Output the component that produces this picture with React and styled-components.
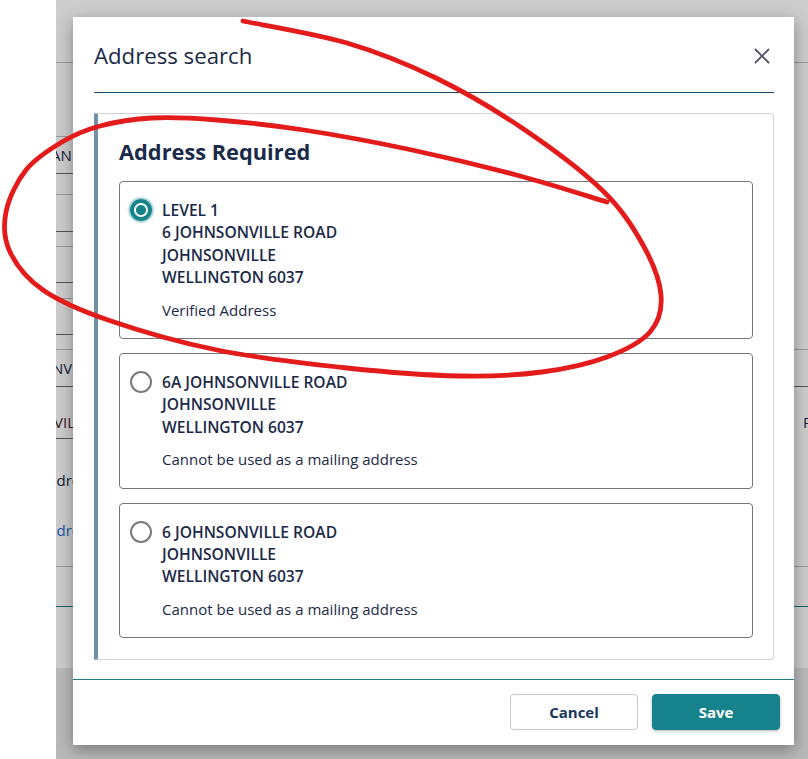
import React from "react";
import styled, { createGlobalStyle } from "styled-components";

const GlobalStyle = createGlobalStyle`
  html, body { margin: 0; padding: 0; height: 100%; }
  body {
    font-family: "Open Sans", "Noto Sans", "Liberation Sans", sans-serif;
    background: #fff;
    overflow: hidden;
  }
  #root { height: 100%; }
  *, *::before, *::after { box-sizing: border-box; }
`;

const Screen = styled.div`
  position: relative;
  display: flex;
  width: 808px;
  height: 759px;
  overflow: hidden;
  background: #fff;
`;

const Gutter = styled.div`
  flex: none;
  width: 56px;
  background: #fff;
`;

const AppArea = styled.div`
  position: relative;
  flex: 1;
  overflow: hidden;
  background: #e8e8e8;
`;

const Page = styled.div`
  display: flex;
  flex-direction: column;
  height: 668px;
  background: #fff;
`;

const PageRow = styled.div`
  flex: none;
  display: flex;
  align-items: stretch;
  height: ${(p) => p.$h}px;
  border-bottom: ${(p) => (p.$full && p.$line ? `1px solid ${p.$line}` : "none")};
`;

const LeftCell = styled.div`
  flex: none;
  width: 120px;
  display: flex;
  align-items: center;
  overflow: hidden;
  border-bottom: ${(p) => (!p.$full && p.$line ? `1px solid ${p.$line}` : "none")};
`;

const PageText = styled.span`
  white-space: nowrap;
  font-size: 15px;
  line-height: 22px;
  margin-left: ${(p) => p.$offset}px;
  color: ${(p) => p.$color};
`;

const RightCell = styled.div`
  flex: none;
  margin-left: auto;
  width: 5px;
  display: flex;
  align-items: center;
`;

const Backdrop = styled.div`
  position: absolute;
  inset: 0;
  background: rgba(0, 0, 0, 0.2);
`;

const Modal = styled.div`
  position: absolute;
  top: 17px;
  left: 17px;
  width: 721px;
  background: #fff;
  box-shadow: 0 5px 15px rgba(0, 0, 0, 0.35);
  display: flex;
  flex-direction: column;
`;

const Header = styled.div`
  display: flex;
  align-items: center;
  justify-content: space-between;
  margin: 0 20px 0 21px;
  padding: 23px 0 21px;
  border-bottom: 1px solid #1d4a6b;
`;

const Title = styled.h2`
  margin: 0;
  font-size: 22.2px;
  line-height: 31px;
  font-weight: 400;
  color: #1b2a48;
`;

const CloseButton = styled.button`
  flex: none;
  width: 24px;
  height: 24px;
  padding: 0;
  border: 0;
  background: none;
  display: flex;
  align-items: center;
  justify-content: center;
  color: #4e5668;
  cursor: pointer;
`;

const Body = styled.div`
  padding: 20px 20px 19px 21px;
`;

const Panel = styled.section`
  display: flex;
  flex-direction: column;
  gap: 14px;
  padding: 25px 20px 21px 21px;
  border: 1px solid #d3d3d3;
  border-left: 4px solid #7090a8;
  border-radius: 0 4px 4px 0;
`;

const PanelTitle = styled.h3`
  margin: 0 0 2px;
  font-size: 21.8px;
  line-height: 26px;
  font-weight: 700;
  color: #1b2a48;
`;

const Option = styled.label`
  display: flex;
  align-items: flex-start;
  gap: 10px;
  padding: 17px 16px 17px 10px;
  border: 1px solid #767676;
  border-radius: 4px;
  cursor: pointer;
`;

const Radio = styled.input`
  appearance: none;
  flex: none;
  margin: 0;
  width: 22px;
  height: 22px;
  border-radius: 50%;
  border: 2px solid #7a7a7a;
  background: #fff;
  cursor: pointer;

  &:checked {
    border: 4px solid #15848c;
    background: radial-gradient(circle, #15848c 0 4.6px, #fff 5.4px);
    box-shadow: 0 0 2px 1.5px rgba(21, 132, 140, 0.45);
  }
`;

const OptionText = styled.div`
  display: flex;
  flex-direction: column;
`;

const AddressLine = styled.div`
  font-size: 15.6px;
  line-height: 22.4px;
  font-weight: 600;
  color: #1b2a48;
  text-transform: uppercase;
`;

const Note = styled.div`
  margin-top: 10px;
  font-size: 15px;
  line-height: 22.4px;
  font-weight: 400;
  color: #1b2a48;
`;

const Footer = styled.div`
  display: flex;
  justify-content: flex-end;
  gap: 14px;
  padding: 14px 14px 15px;
  border-top: 1px solid #207c86;
`;

const Button = styled.button`
  width: 128px;
  height: 36px;
  border-radius: 4px;
  font-family: inherit;
  font-size: 15px;
  font-weight: 700;
  cursor: pointer;
  border: 1px solid ${(p) => (p.$primary ? "#15828c" : "#c9c9c9")};
  background: ${(p) => (p.$primary ? "#16828c" : "#fff")};
  color: ${(p) => (p.$primary ? "#fff" : "#17365a")};
  box-shadow: ${(p) => (p.$primary ? "0 1px 3px rgba(0,0,0,0.3)" : "none")};
`;

const Scribble = styled.svg`
  position: absolute;
  top: 0;
  left: 0;
  width: 808px;
  height: 759px;
  pointer-events: none;
`;

const LIGHT = "#bfbfbf";
const DARK = "#6a6a6a";
const NAVY = "#1b2a48";

const pageRows = [
  { h: 63, line: LIGHT, full: true },
  { h: 74, line: LIGHT },
  { h: 37, line: DARK, text: "AN ROAD", offset: -5, color: NAVY },
  { h: 21, line: LIGHT },
  { h: 37, line: DARK },
  { h: 15, line: LIGHT },
  { h: 36, line: DARK },
  { h: 16, line: LIGHT },
  { h: 36, line: DARK },
  { h: 15, line: LIGHT, full: true },
  { h: 37, line: DARK, full: true, text: "NVILLE", offset: -4, color: NAVY },
  { h: 18 },
  { h: 34, line: DARK, text: "VILLE", offset: -2, color: "#4f1d2c", right: "P" },
  { h: 23 },
  { h: 35, text: "address", offset: -17, color: NAVY },
  { h: 15 },
  { h: 35, text: "address", offset: -17, color: "#1f6bd0" },
  { h: 20, line: LIGHT, full: true },
  { h: 40, line: "#207c86", full: true },
];

const addresses = [
  {
    id: "a1",
    lines: ["Level 1", "6 Johnsonville Road", "Johnsonville", "Wellington 6037"],
    note: "Verified Address",
  },
  {
    id: "a2",
    lines: ["6A Johnsonville Road", "Johnsonville", "Wellington 6037"],
    note: "Cannot be used as a mailing address",
  },
  {
    id: "a3",
    lines: ["6 Johnsonville Road", "Johnsonville", "Wellington 6037"],
    note: "Cannot be used as a mailing address",
  },
];

const scribblePoints = [
  [243, 21], [347, 43], [436, 78], [522, 128], [602, 190], [643, 245],
  [661, 295], [650, 332], [607, 357], [542, 372], [460, 376], [347, 368],
  [217, 350], [108, 320], [43, 290], [10, 252], [6, 212], [26, 170],
  [62, 142], [100, 126], [152, 118], [217, 120], [304, 130], [412, 150],
  [520, 176], [607, 202],
];

function smoothPath(points) {
  let d = `M${points[0][0]},${points[0][1]}`;
  for (let i = 0; i < points.length - 1; i++) {
    const p0 = points[i - 1] || points[i];
    const p1 = points[i];
    const p2 = points[i + 1];
    const p3 = points[i + 2] || p2;
    const c1 = [p1[0] + (p2[0] - p0[0]) / 6, p1[1] + (p2[1] - p0[1]) / 6];
    const c2 = [p2[0] - (p3[0] - p1[0]) / 6, p2[1] - (p3[1] - p1[1]) / 6];
    d += ` C${c1[0].toFixed(1)},${c1[1].toFixed(1)} ${c2[0].toFixed(1)},${c2[1].toFixed(1)} ${p2[0]},${p2[1]}`;
  }
  return d;
}

const CloseIcon = () => (
  <svg width="16" height="16" viewBox="0 0 16 16" fill="none" stroke="currentColor" strokeWidth="1.8" strokeLinecap="round">
    <path d="M1.5 1.5 14.5 14.5M14.5 1.5 1.5 14.5" />
  </svg>
);

export default function App() {
  const [selected, setSelected] = React.useState("a1");
  return (
    <>
      <GlobalStyle />
      <Screen>
        <Gutter />
        <AppArea>
          <Page>
            {pageRows.map((r, i) => (
              <PageRow key={i} $h={r.h} $line={r.line} $full={r.full}>
                <LeftCell $line={r.line} $full={r.full}>
                  {r.text && (
                    <PageText $offset={r.offset} $color={r.color}>
                      {r.text}
                    </PageText>
                  )}
                </LeftCell>
                {r.right && (
                  <RightCell>
                    <PageText $offset={0} $color={NAVY}>
                      {r.right}
                    </PageText>
                  </RightCell>
                )}
              </PageRow>
            ))}
          </Page>
          <Backdrop>
            <Modal role="dialog" aria-label="Address search">
              <Header>
                <Title>Address search</Title>
                <CloseButton aria-label="Close">
                  <CloseIcon />
                </CloseButton>
              </Header>
              <Body>
                <Panel>
                  <PanelTitle>Address Required</PanelTitle>
                  {addresses.map((a) => (
                    <Option key={a.id}>
                      <Radio
                        type="radio"
                        name="address"
                        checked={selected === a.id}
                        onChange={() => setSelected(a.id)}
                      />
                      <OptionText>
                        {a.lines.map((l) => (
                          <AddressLine key={l}>{l}</AddressLine>
                        ))}
                        <Note>{a.note}</Note>
                      </OptionText>
                    </Option>
                  ))}
                </Panel>
              </Body>
              <Footer>
                <Button>Cancel</Button>
                <Button $primary>Save</Button>
              </Footer>
            </Modal>
          </Backdrop>
        </AppArea>
        <Scribble viewBox="0 0 808 759">
          <path
            d={smoothPath(scribblePoints)}
            fill="none"
            stroke="#e31b1b"
            strokeWidth="4.8"
            strokeLinecap="round"
            strokeLinejoin="round"
          />
        </Scribble>
      </Screen>
    </>
  );
}
